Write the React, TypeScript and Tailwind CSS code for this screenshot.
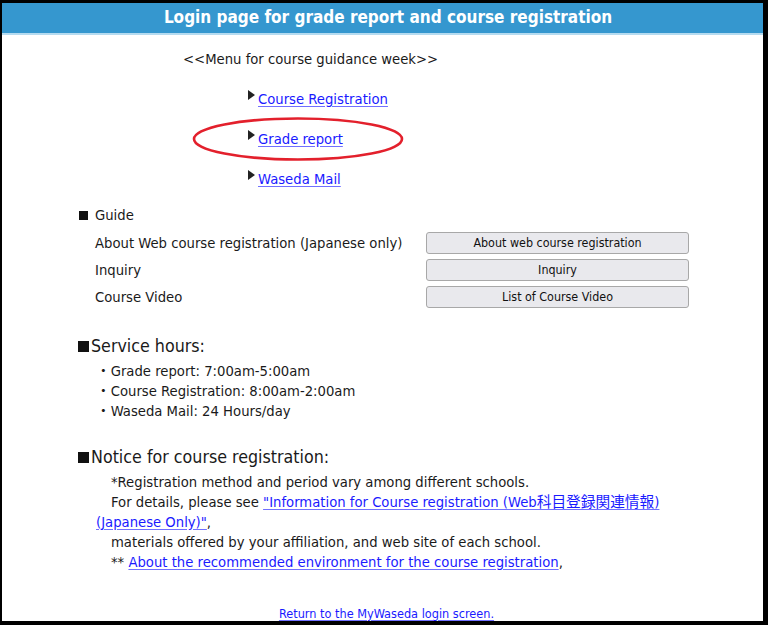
import React from "react";

const Tri = () => (
  <span className="inline-block w-[10px] self-start pt-[1px]">
    <svg width="7" height="10" viewBox="0 0 7 10" className="block">
      <path d="M0 0 L7 5 L0 10 Z" fill="#222" />
    </svg>
  </span>
);

const NavLink = ({ label }: { label: string }) => (
  <div className="flex h-[20px] items-start pl-[246px] leading-[20px]">
    <Tri />
    <a href="#" className="text-[#1a1aff] underline decoration-[#7070ff] underline-offset-2">
      {label}
    </a>
  </div>
);

const GuideRow = ({ label, button }: { label: string; button: string }) => (
  <div className="flex h-[27px] items-center">
    <div className="w-[424px] shrink-0 whitespace-nowrap pl-[93px] leading-[20px]">{label}</div>
    <button className="h-[22px] w-[263px] shrink-0 rounded-[3px] border border-[#a8a8a8] bg-[#e9e9ed] text-[12.4px] leading-[20px] text-[#111]">
      {button}
    </button>
  </div>
);

export default function App() {
  return (
    <div className="h-[625px] w-[768px] overflow-hidden bg-black pb-[4px] pl-[2px] pr-[5px] pt-[3px] font-['DejaVu_Sans_Condensed','DejaVu_Sans','Noto_Sans_CJK_JP',sans-serif] [font-stretch:condensed]">
      <div className="flex h-full flex-col overflow-hidden bg-white text-[14.7px] text-[#1a1a1a]">
        <div className="flex h-[30px] shrink-0 items-center justify-center bg-[#3597cf] pl-[11px] text-[17px] font-bold text-white">
          Login page for grade report and course registration
        </div>
        <div className="h-[2px] shrink-0 bg-[#b5dbf0]" />

        <div className="mt-[14px] h-[20px] pl-[181px] leading-[20px]">&lt;&lt;Menu for course guidance week&gt;&gt;</div>

        <div className="relative mt-[20px] flex flex-col gap-[20px]">
          <NavLink label="Course Registration" />
          <NavLink label="Grade report" />
          <NavLink label="Waseda Mail" />
          <svg
            className="pointer-events-none absolute left-[189px] top-[27px]"
            width="214"
            height="48"
            viewBox="0 0 214 48"
          >
            <ellipse cx="107" cy="23" rx="104" ry="20.5" fill="none" stroke="#e3202c" strokeWidth="2.6" />
          </svg>
        </div>

        <div className="mt-[16px] flex h-[20px] items-center pl-[77px] leading-[20px]">
          <span className="inline-block h-[9px] w-[9px] bg-[#111]" />
          <span className="pl-[7px]">Guide</span>
        </div>

        <div className="mt-[4px] flex flex-col">
          <GuideRow label="About Web course registration (Japanese only)" button="About web course registration" />
          <GuideRow label="Inquiry" button="Inquiry" />
          <GuideRow label="Course Video" button="List of Course Video" />
        </div>

        <div className="mt-[24px] flex h-[24px] items-center pl-[76px] text-[17.7px] leading-[24px]">
          <span className="inline-block h-[11px] w-[11px] bg-[#111]" />
          <span className="pl-[2px]">Service hours:</span>
        </div>

        <div className="mt-[3px] flex flex-col pl-[94px] leading-[20px]">
          <div>・Grade report: 7:00am-5:00am</div>
          <div>・Course Registration: 8:00am-2:00am</div>
          <div>・Waseda Mail: 24 Hours/day</div>
        </div>

        <div className="mt-[24px] flex h-[24px] items-center pl-[76px] text-[17.7px] leading-[24px]">
          <span className="inline-block h-[11px] w-[11px] bg-[#111]" />
          <span className="pl-[2px]">Notice for course registration:</span>
        </div>

        <div className="mt-[3px] pl-[94px] leading-[20px]">
          <div className="pl-[15px]">*Registration method and period vary among different schools.</div>
          <div className="whitespace-nowrap">
            <span className="pl-[15px]">For details, please see </span>
            <a href="#" className="text-[#1a1aff] underline decoration-[#7070ff] underline-offset-2">
              "Information for Course registration (Web科目登録関連情報)
              <br />
              (Japanese Only)"
            </a>
            ,
          </div>
          <div className="pl-[15px]">materials offered by your affiliation, and web site of each school.</div>
          <div className="pl-[15px]">
            **{" "}
            <a href="#" className="text-[#1a1aff] underline decoration-[#7070ff] underline-offset-2">
              About the recommended environment for the course registration
            </a>
            ,
          </div>
        </div>

        <div className="mt-[34px] pl-[8px] text-center text-[12.6px] leading-[16px]">
          <a href="#" className="text-[#1a1aff] underline decoration-[#7070ff] underline-offset-2">
            Return to the MyWaseda login screen.
          </a>
        </div>
      </div>
    </div>
  );
}
